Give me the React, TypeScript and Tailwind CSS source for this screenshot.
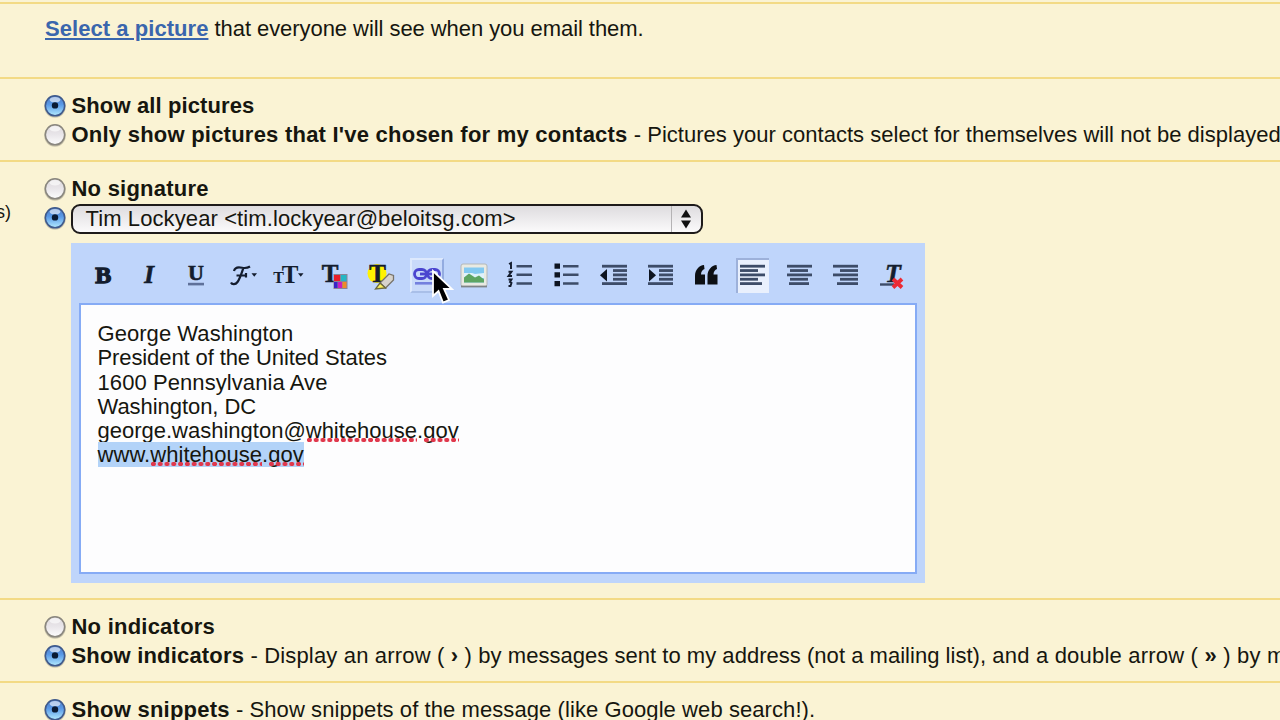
import type { ReactNode } from 'react';

const INK = '#141d2e';
const BAR = '#3d4c68';

function Radio({ checked = false }: { checked?: boolean }) {
    return (
        <svg className="w-[22px] h-[24px] shrink-0" viewBox="0 0 22 24">
            <defs>
                <linearGradient id="radioOn" x1="0" y1="0" x2="0" y2="1">
                    <stop offset="0" stopColor="#4a78c4" />
                    <stop offset="0.45" stopColor="#5b9be8" />
                    <stop offset="1" stopColor="#b4ecff" />
                </linearGradient>
                <linearGradient id="radioOff" x1="0" y1="0" x2="0" y2="1">
                    <stop offset="0" stopColor="#dcd8dc" />
                    <stop offset="0.5" stopColor="#e9e6ea" />
                    <stop offset="1" stopColor="#fdfdfd" />
                </linearGradient>
            </defs>
            <ellipse cx="11" cy="12.6" rx="10.8" ry="11.2" fill="#00000030" />
            <ellipse
                cx="11"
                cy="11.8"
                rx="9.7"
                ry="10"
                fill={checked ? 'url(#radioOn)' : 'url(#radioOff)'}
                stroke={checked ? '#3f5a8c' : '#8a877f'}
                strokeWidth="1.6"
            />
            <ellipse cx="11" cy="5.8" rx="5.4" ry="2.8" fill="#fff" opacity="0.6" />
            {checked && <circle cx="11" cy="11.4" r="3.2" fill="#0a1a33" />}
        </svg>
    );
}

function Option({ checked, children }: { checked?: boolean; children: ReactNode }) {
    return (
        <div className="flex items-center h-[28.6px] whitespace-nowrap">
            <Radio checked={checked} />
            <span className="ml-[5.5px]">{children}</span>
        </div>
    );
}

function Label({ children }: { children: string }) {
    return <b className="tracking-[0.23px]">{children}</b>;
}

function Lines({ rows }: { rows: [number, number][] }) {
    return (
        <>
            {rows.map(([x, w], i) => (
                <rect key={i} x={x} y={9.8 + i * 4.35} width={w} height="2.8" fill={BAR} />
            ))}
        </>
    );
}

function Letter({ x, y, size, children, italic = false }: { x: number; y: number; size: number; children: string; italic?: boolean }) {
    return (
        <text
            x={x}
            y={y}
            fontSize={size}
            fontFamily="'Liberation Serif', serif"
            fontWeight="bold"
            fontStyle={italic ? 'italic' : 'normal'}
            textAnchor="middle"
            fill={INK}
        >
            {children}
        </text>
    );
}

const tools: { name: string; icon: ReactNode; state?: 'hover' | 'active' }[] = [
    { name: 'Bold', icon: <g stroke={INK} strokeWidth="1.3"><Letter x={24.3} y={27.6} size={24}>B</Letter></g> },
    { name: 'Italic', icon: <g stroke={INK} strokeWidth="0.7"><Letter x={23} y={27.6} size={25} italic>I</Letter></g> },
    {
        name: 'Underline',
        icon: (
            <>
                <g stroke={INK} strokeWidth="0.6"><Letter x={24} y={25.3} size={22}>U</Letter></g>
                <rect x="16" y="27.8" width="16" height="2.6" fill="#5f719a" />
            </>
        ),
    },
    {
        name: 'Font',
        icon: (
            <>
                <path d="M15 16c1-4 5-4 8-3.300 3 .7 5 .6 8-1.200M24.500 12.500c-2 6-3.500 11-6 14.500-2 2.800-5.500 2.800-6.500.5M17.500 20.500h9M27 18v4.500" fill="none" stroke={INK} strokeWidth="2.200" />
                <path d="M32.500 18.200h5.500l-2.750 3.600z" fill={INK} />
            </>
        ),
    },
    {
        name: 'Size',
        icon: (
            <>
                <Letter x={13.500} y={28} size={16}>T</Letter>
                <Letter x={25} y={28} size={25}>T</Letter>
                <path d="M33 18.200h5.500l-2.750 3.600z" fill={INK} />
            </>
        ),
    },
    {
        name: 'Text color',
        icon: (
            <>
                <g stroke={INK} strokeWidth="0.6"><Letter x={19} y={27} size={25}>T</Letter></g>
                <rect x="22.500" y="19" width="14" height="15" fill="#8a8496" />
                <rect x="23" y="20" width="6" height="6" fill="#e8202c" />
                <rect x="30" y="20" width="5.500" height="6" fill="#25b6c4" />
                <rect x="23" y="27" width="3.500" height="6" fill="#3a24c8" />
                <rect x="27" y="27" width="4" height="6" fill="#c81ec0" />
                <rect x="31.500" y="27" width="4" height="6" fill="#f08a2a" />
            </>
        ),
    },
    {
        name: 'Highlight',
        icon: (
            <>
                <circle cx="19" cy="18.500" r="9.500" fill="#fff200" />
                <g stroke={INK} strokeWidth="0.6"><Letter x={19.500} y={26.500} size={25}>T</Letter></g>
                <path d="M22 28l9-9 4.500 1.500v4.500l-8 8z" fill="#d7d3cc" stroke="#77736a" strokeWidth="1.300" />
                <path d="M22 28l5.500 5-10 1z" fill="#fdf25c" stroke="#6c6a3c" strokeWidth="1.300" />
            </>
        ),
    },
    {
        name: 'Link',
        state: 'hover',
        icon: (
            <>
                <g fill="none" stroke="#4b45cf" strokeWidth="2.800">
                    <rect x="10.500" y="14.500" width="12" height="9" rx="4.500" />
                    <rect x="23.500" y="14.500" width="12" height="9" rx="4.500" />
                    <path d="M16 19h14" />
                </g>
                <rect x="11" y="27" width="19" height="2.600" fill="#7480de" />
            </>
        ),
    },
    {
        name: 'Image',
        icon: (
            <>
                <rect x="10" y="9" width="26" height="22.500" rx="2" fill="#e9eae2" stroke="#b3b7b8" />
                <path d="M10 31.500h26" stroke="#7f8487" strokeWidth="1.800" />
                <rect x="13" y="12.500" width="20" height="15" fill="#83c9f1" />
                <path d="M13 18h8l3 1 9-1v5H13z" fill="#dff2fb" />
                <path d="M13 27.500v-5l5-4 6 4 4-2 5 4v3z" fill="#5da562" />
            </>
        ),
    },
    {
        name: 'Numbered list',
        icon: (
            <>
                <path d="M12 9l2-1v6M11.500 16.800h3l-3 4.200h3.500M11.500 24.500h3l-1.500 2.500 1.500 1-1 3h-2" fill="none" stroke={INK} strokeWidth="1.900" />
                <path d="M19.500 11.200H35M19.500 19.800H35M19.500 28.500H35" stroke={BAR} strokeWidth="2.600" />
            </>
        ),
    },
    {
        name: 'Bulleted list',
        icon: (
            <>
                <path d="M10.500 8.500H16v5.200h-5.500zM10.500 17.200H16v5.200h-5.500zM10.500 26H16v5.200h-5.500z" fill="#0d1420" />
                <path d="M19 11.200h15.500M19 19.800h15.500M19 28.500h15.500" stroke={BAR} strokeWidth="2.600" />
            </>
        ),
    },
    {
        name: 'Indent less',
        icon: (
            <>
                <Lines rows={[[12, 25], [23, 14], [23, 14], [23, 14], [12, 25]]} />
                <path d="M17 14v12.500l-7-6.200z" fill="#0d1420" />
            </>
        ),
    },
    {
        name: 'Indent more',
        icon: (
            <>
                <Lines rows={[[12, 25], [23, 14], [23, 14], [23, 14], [12, 25]]} />
                <path d="M13 14v12.500l7-6.200z" fill="#0d1420" />
            </>
        ),
    },
    {
        name: 'Quote',
        icon: (
            <path d="M21 10c-5 .5-9 5-9 11v8.500h10v-10h-4c0-3 1.500-4.500 3.500-5.500zM33.500 10c-5 .5-9 5-9 11v8.500h10v-10h-4c0-3 1.500-4.500 3.500-5.500z" fill="#0d1014" />
        ),
    },
    { name: 'Align left', state: 'active', icon: <Lines rows={[[11, 25], [11, 18], [11, 25], [11, 18], [11, 22]]} /> },
    { name: 'Align center', icon: <Lines rows={[[11, 25], [14, 18], [11, 25], [14, 18], [13, 20]]} /> },
    { name: 'Align right', icon: <Lines rows={[[11, 25], [18, 18], [11, 25], [18, 18], [15, 21]]} /> },
    {
        name: 'Remove formatting',
        icon: (
            <>
                <g stroke={INK} strokeWidth="0.5"><Letter x={24} y={27} size={26} italic>T</Letter></g>
                <path d="M11 29.500h14" stroke={BAR} strokeWidth="2.400" />
                <path d="M24 24l9 8.500M33 24l-9 8.500" stroke="#ec2a34" strokeWidth="3.800" />
            </>
        ),
    },
];

function Toolbar() {
    return (
        <div className="flex h-[60px] pt-3">
            {tools.map((tool) => (
                <button key={tool.name} title={tool.name} className="relative w-[46.45px] h-[40px] flex justify-center shrink-0">
                    {tool.state === 'active' && (
                        <span className="absolute left-[7px] top-[3px] w-[33px] h-[35px] bg-[#e9f0fd] border-t-2 border-l-2 border-[#9db1da]" />
                    )}
                    {tool.state === 'hover' && (
                        <span className="absolute left-[6px] top-[3px] w-[34px] h-[35px] bg-[#c9dafa] border-2 border-t-[#dde9fd] border-l-[#dde9fd] border-r-[#93ace0] border-b-[#a9bfe8]" />
                    )}
                    <svg className="relative w-[46px] h-[40px]" viewBox="0 0 46 40">
                        {tool.icon}
                    </svg>
                </button>
            ))}
        </div>
    );
}

function Misspelled({ children }: { children: string }) {
    return (
        <span className="relative">
            {children}
            <span className="absolute left-0 right-0 bottom-[1px] h-[4px] bg-[radial-gradient(circle_at_center,#e0384c_2px,transparent_2.800px)] bg-[length:6.800px_4px]" />
        </span>
    );
}

export default function App() {
    return (
        <div className="w-[1280px] h-[720px] overflow-hidden bg-[#faf3d4] font-['Liberation_Sans',Arial,sans-serif] text-[22px] leading-[28px] text-[#16160f]">
            <div className="h-[2px]" />
            <section className="h-[75px] border-t-2 border-[#f3da85] pl-[45px] pt-[11px] whitespace-nowrap">
                <a className="font-bold text-[#3a66ad] underline decoration-2 underline-offset-2 tracking-[0.05px]">Select a picture</a>
                <span className="tracking-[-0.06px]"> that everyone will see when you email them.</span>
            </section>

            <section className="h-[83px] border-t-2 border-[#f3da85] pl-[44px] pt-[13px]">
                <Option checked><b className="tracking-[0.12px]">Show all pictures</b></Option>
                <Option>
                    <Label>Only show pictures that I've chosen for my contacts</Label>
                    <span className="tracking-[0.02px]"> - Pictures your contacts select for themselves will not be displayed.</span>
                </Option>
            </section>

            <section className="h-[438px] border-t-2 border-[#f3da85] flex">
                <div className="w-[44px] shrink-0 pt-[36px] text-[18px] -ml-[4px] mr-[4px]">s)</div>
                <div className="pt-[13px]">
                    <Option><Label>No signature</Label></Option>
                    <div className="flex items-center h-[29px]">
                        <Radio checked />
                        <div className="ml-[5px] mt-[2px] flex items-center w-[632px] h-[30px] border-2 border-[#1d1a1a] rounded-[9px] bg-linear-to-b from-[#dedcdf] to-[#fbfafb] pl-[12.5px] whitespace-nowrap">
                            <span className="flex-1 tracking-[0.1px]">Tim Lockyear &lt;tim.lockyear@beloitsg.com&gt;</span>
                            <span className="w-[30px] h-full border-l border-[#b5b3b5] flex items-center justify-center pr-[1px]">
                                <svg className="w-[12px] h-[20px]" viewBox="0 0 12 20">
                                    <path d="M6 0.500l5 8H1zM6 19.500l5-8H1z" fill="#111" />
                                </svg>
                            </span>
                        </div>
                    </div>
                    <div className="relative ml-[27px] mt-[10.4px] w-[854px] h-[340px] bg-[#bfd5fb] px-2 pb-2">
                        <Toolbar />
                        <div className="h-[271px] border-2 border-[#86abf5] bg-[#fdfdfe] pl-[16.5px] pt-[17px] leading-[24.3px]">
                            <p className="tracking-[0.05px]">George Washington</p>
                            <p className="tracking-[-0.1px]">President of the United States</p>
                            <p className="tracking-[0.08px]">1600 Pennsylvania Ave</p>
                            <p className="tracking-[-0.05px]">Washington, DC</p>
                            <p>george.washington@<Misspelled>whitehouse</Misspelled>.<Misspelled>gov</Misspelled></p>
                            <p><span className="bg-[#b3d3f8] tracking-[0.05px]">www.<Misspelled>whitehouse</Misspelled>.<Misspelled>gov</Misspelled></span></p>
                        </div>
                        <svg className="absolute left-[360px] top-[26px] w-[24px] h-[36px]" viewBox="0 0 24 36">
                            <path d="M2 2v25l5.500-5 4.500 11.500 6-2.500-5-11h8z" fill="#000" stroke="#fff" strokeWidth="1.800" />
                        </svg>
                    </div>
                </div>
            </section>

            <section className="h-[83px] border-t-2 border-[#f3da85] pl-[44px] pt-[13px]">
                <Option><Label>No indicators</Label></Option>
                <Option checked>
                    <b className="tracking-[0.18px]">Show indicators</b>
                    <span className="tracking-[0.17px]"> - Display an arrow ( <b>›</b> ) </span>
                    <span className="tracking-[0.03px]">by messages sent to my address (not a mailing list), </span>
                    <span className="tracking-[0.2px]">and a double arrow ( <b>»</b> ) by messages sent only to me.</span>
                </Option>
            </section>

            <section className="h-[60px] border-t-2 border-[#f3da85] pl-[44px] pt-[13px]">
                <Option checked>
                    <Label>Show snippets</Label>
                    <span className="tracking-[0.08px]"> - Show snippets of the message (like Google web search!).</span>
                </Option>
            </section>
        </div>
    );
}
